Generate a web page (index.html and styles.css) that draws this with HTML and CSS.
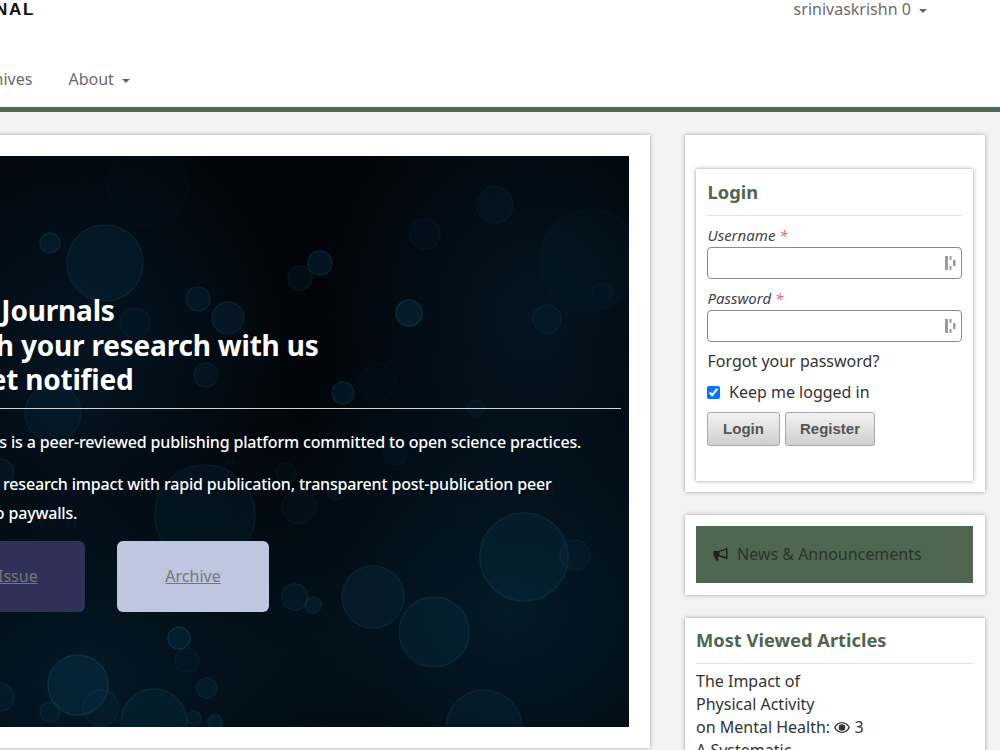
FILE: index.html
```html
<!DOCTYPE html>
<html lang="en">
<head>
<meta charset="utf-8">
<title>Journal</title>
<link rel="stylesheet" href="styles.css">
</head>
<body>
<div class="page">
  <header class="site-header">
    <div class="top-row">
      <div class="logo">JOURNAL</div>
      <div class="user-menu">srinivaskrishn 0 <span class="caret caret-user"></span></div>
    </div>
    <nav class="nav">
      <a>Archives</a>
      <a>About <span class="caret"></span></a>
    </nav>
  </header>
  <div class="content">
    <main class="main-card">
      <section class="hero">
        <svg class="bokeh" viewBox="-179 156 808 571" aria-hidden="true">
          <g fill="#0d3a55" stroke="#1f6184" stroke-width="1.5">
            <circle cx="105" cy="263" r="38" opacity=".38"/>
            <circle cx="50" cy="243" r="10" opacity=".45"/>
            <circle cx="148" cy="186" r="40" opacity=".08"/>
            <circle cx="320" cy="263" r="12" opacity=".5"/>
            <circle cx="300" cy="278" r="12" opacity=".3"/>
            <circle cx="198" cy="299" r="12" opacity=".4"/>
            <circle cx="228" cy="318" r="16" opacity=".45"/>
            <circle cx="409" cy="313" r="13" opacity=".6"/>
            <circle cx="425" cy="234" r="15" opacity=".18"/>
            <circle cx="495" cy="205" r="18" opacity=".22"/>
            <circle cx="547" cy="319" r="14" opacity=".25"/>
            <circle cx="590" cy="260" r="50" opacity=".12"/>
            <circle cx="602" cy="293" r="10" opacity=".15"/>
            <circle cx="343" cy="393" r="11" opacity=".45"/>
            <circle cx="378" cy="382" r="18" opacity=".12"/>
            <circle cx="476" cy="408" r="8" opacity=".25"/>
            <circle cx="135" cy="323" r="15" opacity=".2"/>
            <circle cx="206" cy="375" r="12" opacity=".3"/>
            <circle cx="53" cy="413" r="28" opacity=".3"/>
            <circle cx="205" cy="515" r="50" opacity=".3"/>
            <circle cx="299" cy="507" r="17" opacity=".2"/>
            <circle cx="286" cy="473" r="10" opacity=".2"/>
            <circle cx="337" cy="490" r="10" opacity=".2"/>
            <circle cx="395" cy="453" r="12" opacity=".15"/>
            <circle cx="0" cy="473" r="14" opacity=".3"/>
            <circle cx="524" cy="557" r="44" opacity=".42"/>
            <circle cx="373" cy="597" r="31" opacity=".4"/>
            <circle cx="434" cy="632" r="35" opacity=".42"/>
            <circle cx="295" cy="597" r="13" opacity=".35"/>
            <circle cx="313" cy="605" r="8" opacity=".45"/>
            <circle cx="575" cy="555" r="15" opacity=".25"/>
            <circle cx="78" cy="685" r="30" opacity=".55"/>
            <circle cx="101" cy="708" r="18" opacity=".25"/>
            <circle cx="154" cy="722" r="33" opacity=".4"/>
            <circle cx="179" cy="638" r="11" opacity=".55"/>
            <circle cx="187" cy="660" r="12" opacity=".22"/>
            <circle cx="207" cy="688" r="10" opacity=".35"/>
            <circle cx="194" cy="718" r="7" opacity=".35"/>
            <circle cx="215" cy="722" r="7" opacity=".5"/>
            <circle cx="484" cy="728" r="38" opacity=".35"/>
            <circle cx="50" cy="712" r="10" opacity=".3"/>
            <circle cx="0" cy="697" r="14" opacity=".3"/>
          </g>
        </svg>
        <div class="hero-body">
          <h1 class="hero-title">Prime Journals<br>Publish your research with us<br>and get notified</h1>
          <hr class="hero-rule">
          <p class="hero-text">Our Journals is a peer-reviewed publishing platform committed to open science practices.</p>
          <p class="hero-text">Widen your research impact with rapid publication, transparent post-publication peer<br>review, &amp; no paywalls.</p>
          <div class="hero-actions">
            <a class="hero-btn hero-btn-dark">Current Issue</a>
            <a class="hero-btn hero-btn-light">Archive</a>
          </div>
        </div>
      </section>
    </main>
    <aside class="sidebar">
      <div class="card card-login">
        <form class="login-card">
          <h2 class="card-title">Login</h2>
          <label class="field-label">Username <span class="req">*</span></label>
          <div class="input-box">
            <svg class="pm-icon" viewBox="0 0 11 14" aria-hidden="true"><rect x="0" y="0" width="3" height="14"/><rect x="4.5" y="0" width="2" height="4"/><rect x="4.5" y="10" width="2" height="4"/><rect x="8" y="4" width="2.5" height="6"/></svg>
          </div>
          <label class="field-label">Password <span class="req">*</span></label>
          <div class="input-box">
            <svg class="pm-icon" viewBox="0 0 11 14" aria-hidden="true"><rect x="0" y="0" width="3" height="14"/><rect x="4.5" y="0" width="2" height="4"/><rect x="4.5" y="10" width="2" height="4"/><rect x="8" y="4" width="2.5" height="6"/></svg>
          </div>
          <div class="forgot">Forgot your password?</div>
          <label class="remember"><input type="checkbox" checked class="check"> Keep me logged in</label>
          <div class="login-actions">
            <button type="button" class="btn btn-login">Login</button>
            <button type="button" class="btn btn-register">Register</button>
          </div>
        </form>
      </div>
      <div class="card card-news">
        <div class="news-bar">
          <svg class="megaphone" viewBox="0 0 16 14" aria-hidden="true"><path d="M15 0.800v11.400L6.500 9.600H5.200l.9 4H3.400l-1-4H1V4h5.500zM13.600 2.700 7 4.900v3l6.600 2.100z" fill-rule="evenodd"/></svg>
          <span>News &amp; Announcements</span>
        </div>
      </div>
      <div class="card card-articles">
        <h2 class="card-title">Most Viewed Articles</h2>
        <div class="article">The Impact of<br>Physical Activity<br>on Mental Health: <svg class="eye" viewBox="0 0 16 11" aria-hidden="true"><path d="M8 0C4.500 0 1.600 2.200 0 5.500 1.600 8.800 4.500 11 8 11s6.400-2.200 8-5.500C14.400 2.200 11.500 0 8 0zm0 1.200c2.700 0 5 1.700 6.500 4.300C13 8.100 10.700 9.800 8 9.800S3 8.100 1.500 5.500C3 2.900 5.300 1.200 8 1.200zM8 2.200a3.300 3.300 0 1 0 0 6.600 3.300 3.300 0 0 0 0-6.600z" fill-rule="evenodd"/></svg> 3<br>A Systematic</div>
      </div>
    </aside>
  </div>
</div>
</body>
</html>
```
FILE: styles.css
```css
* { box-sizing: border-box; }
html, body { margin: 0; height: 750px; overflow: hidden; }
body {
  background: #f3f3f3;
  font-family: "Noto Sans", sans-serif;
  font-size: 16px;
  color: #333;
}
.page { width: 1200px; margin-left: -200px; }

.site-header {
  height: 112px;
  background: #fff;
  border-bottom: 5px solid #4f6650;
}
.top-row {
  display: flex;
  justify-content: space-between;
  height: 62px;
  padding-right: 73px;
}
.logo {
  width: 235px;
  padding-top: 1px;
  text-align: right;
  font-family: "Liberation Sans", sans-serif;
  font-weight: 700;
  font-size: 17px;
  line-height: 18px;
  letter-spacing: 1.7px;
  color: #111;
}
.user-menu {
  color: #6b6b6b;
  font-size: 16px;
  line-height: 18px;
}
.caret {
  display: inline-block;
  width: 0;
  height: 0;
  margin-left: 4px;
  vertical-align: middle;
  border-top: 4px solid #666;
  border-left: 4px solid transparent;
  border-right: 4px solid transparent;
}
.nav {
  display: flex;
  justify-content: flex-end;
  gap: 36px;
  width: 330px;
  color: #6b6b6b;
  line-height: 34px;
}

.content {
  display: flex;
  align-items: flex-start;
  gap: 35px;
  padding-top: 23px;
}
.main-card {
  flex: none;
  width: 850px;
  height: 613px;
  padding: 21px;
  background: #fff;
  box-shadow: 0 0 4px rgba(0, 0, 0, .35);
}
.hero {
  position: relative;
  height: 571px;
  overflow: hidden;
  color: #fff;
  background:
    radial-gradient(ellipse 240px 280px at 88% 28%, #041420 0%, rgba(4, 20, 32, 0) 100%),
    radial-gradient(ellipse 340px 280px at 85% 80%, #031a28 0%, rgba(3, 26, 40, 0) 100%),
    radial-gradient(ellipse 300px 220px at 33% 92%, #031a28 0%, rgba(3, 26, 40, 0) 100%),
    radial-gradient(ellipse 240px 280px at 32% 35%, #041522 0%, rgba(4, 21, 34, 0) 100%),
    #010408;
}
.bokeh { position: absolute; inset: 0; width: 100%; height: 100%; opacity: .6; filter: blur(.7px); }
.hero-body { position: relative; padding: 137px 8px 0 92px; }
.hero-title {
  margin: 0;
  font-size: 28px;
  line-height: 34.5px;
  font-weight: 700;
  letter-spacing: -.2px;
}
.hero-rule { margin: 11px 0 0; border: 0; border-top: 1px solid #cfd3d8; }
.hero-text { margin: 19px 0 0; font-size: 16px; line-height: 29px; font-weight: 500; letter-spacing: -.17px; }
.hero-text + .hero-text { margin-top: 13px; }
.hero-actions { display: flex; gap: 32px; margin: 13px 0 0 20px; }
.hero-btn {
  display: flex;
  align-items: center;
  justify-content: center;
  width: 152px;
  height: 71px;
  border-radius: 6px;
  color: #777;
  text-decoration: underline;
}
.hero-btn-dark { background: #2f3159; padding-right: 44px; }
.hero-btn-light { background: #bfc6e0; }

.sidebar { flex: none; width: 300px; display: flex; flex-direction: column; gap: 23px; }
.card { background: #fff; box-shadow: 0 0 4px rgba(0, 0, 0, .35); }
.card-login { padding: 34px 12px 11px 11px; height: 357px; }
.login-card {
  height: 312px;
  padding: 9px 11px 0 11px;
  box-shadow: 0 0 4px rgba(0, 0, 0, .4);
}
.card-title {
  margin: 0;
  padding-bottom: 9px;
  font-size: 18.3px;
  line-height: 28px;
  font-weight: 700;
  color: #4f6650;
  border-bottom: 1px solid #e3e3e3;
}
.login-card .card-title { padding-left: .5px; }
.field-label {
  display: block;
  margin: 8px 0 1px;
  padding-left: .5px;
  font-style: italic;
  font-size: 15px;
  line-height: 22px;
  color: #444;
}
.req { color: #e8626a; }
.input-box {
  display: flex;
  align-items: center;
  justify-content: flex-end;
  height: 32px;
  padding-right: 5px;
  border: 1px solid #8a8a8a;
  border-radius: 4px;
}
.pm-icon { width: 11px; height: 14px; fill: #9b9b9b; }
.forgot { margin-top: 7px; padding-left: .5px; line-height: 24px; }
.remember { display: flex; align-items: center; gap: 9px; margin-top: 7px; line-height: 24px; }
.check { margin: 0; width: 13px; height: 13px; }
.login-actions { display: flex; gap: 5px; margin-top: 8px; }
.btn {
  height: 34px;
  padding: 0 0 2px;
  font-family: "Liberation Sans", sans-serif;
  font-weight: 700;
  font-size: 15px;
  color: #555;
  background: linear-gradient(#f2f2f2, #cfcfcf);
  border: 1px solid #a8a8a8;
  border-radius: 3px;
}
.btn-login { width: 73px; }
.btn-register { width: 90px; }

.card-news { padding: 11px 12px 12px 11px; height: 80px; }
.news-bar {
  display: flex;
  align-items: center;
  gap: 8px;
  height: 57px;
  padding: 0 0 2px 16px;
  background: #4f6650;
  color: #2a332b;
}
.megaphone { width: 17px; height: 14px; fill: #1c201c; }

.card-articles { height: 300px; padding: 8px 12px 0 11px; }
.article { margin-top: 6px; line-height: 23px; color: #333; }
.eye { width: 16px; height: 11px; fill: #333; }
```
